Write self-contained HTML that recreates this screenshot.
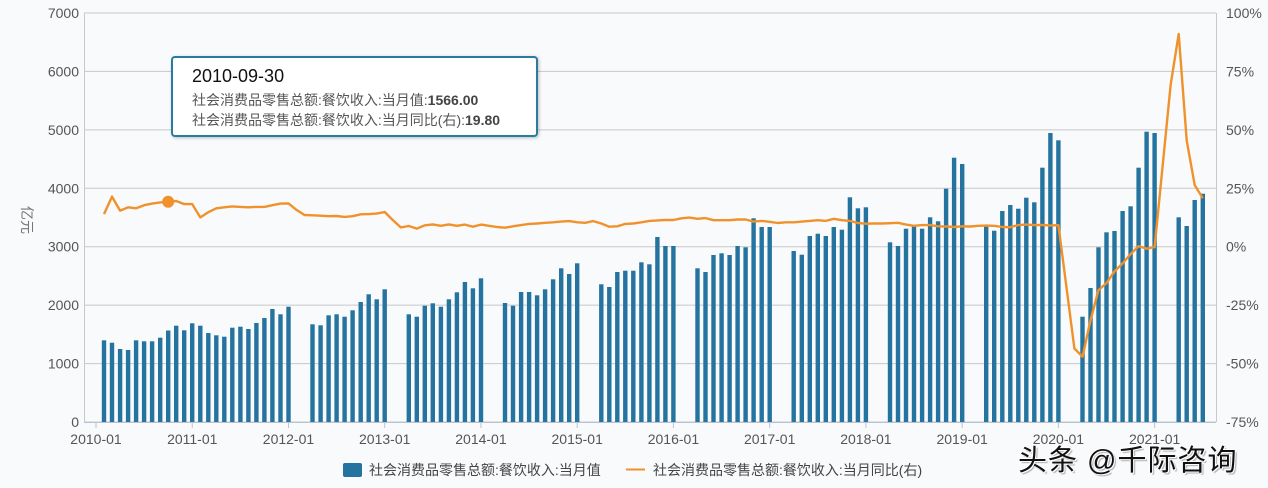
<!DOCTYPE html>
<html><head><meta charset="utf-8"><style>
html,body{margin:0;padding:0;background:#f9fafc;}
body{width:1268px;height:488px;overflow:hidden;position:relative;font-family:"Liberation Sans","Noto Sans CJK SC",sans-serif;}
svg text{font-family:"Liberation Sans","Noto Sans CJK SC",sans-serif;}
.tip{position:absolute;left:171px;top:56px;width:363px;height:77px;border:2px solid #2b7aa3;border-radius:4px;background:#fff;box-shadow:1px 1px 3px rgba(0,0,0,0.25);}
.tip .d{position:absolute;left:19px;top:8px;font-size:18px;color:#111;}
.tip .l{position:absolute;left:19px;font-size:14px;color:#555;}
.tip b{color:#444;}
.wm{position:absolute;left:1018px;top:437px;font-size:29px;color:#111;letter-spacing:1px;text-shadow:1px 1px 0 #fff,-1px -1px 0 #fff,2px 2px 1px rgba(0,0,0,0.3);font-family:"Liberation Sans","Noto Sans CJK SC",sans-serif;}
</style></head><body>
<svg id="c" width="1268" height="488" style="position:absolute;left:0;top:0"></svg>
<div class="tip"><div class="d">2010-09-30</div>
<div class="l" style="top:32px">社会消费品零售总额:餐饮收入:当月值:<b>1566.00</b></div>
<div class="l" style="top:52px">社会消费品零售总额:餐饮收入:当月同比(右):<b>19.80</b></div></div>
<div class="wm">头条 @千际咨询</div>
<script>
(function(){
var s='';
function X(i){return 96+8.02*(i+1);}
function YV(v){return 422-v*0.05843;}
function YP(p){return 248-p*2.337;}
for(var k=0;k<=7;k++){var gy=422-k*58.43;s+='<line x1="84" x2="1216" y1="'+gy+'" y2="'+gy+'" stroke="#c8c8c8" stroke-width="1"/>';
s+='<text x="79" y="'+(gy+5)+'" font-size="14" fill="#555" text-anchor="end">'+(k*1000)+'</text>';
var pct=(k-3)*25;s+='<text x="1226" y="'+(gy+5)+'" font-size="14" fill="#555">'+pct+'%</text>';}
s+='<line x1="84.5" x2="84.5" y1="13" y2="422" stroke="#c8c8c8"/><line x1="1216.5" x2="1216.5" y1="13" y2="422" stroke="#c8c8c8"/>';
s+='<line x1="84" x2="1216" y1="422.5" y2="422.5" stroke="#b8c4d4"/>';
for(var yr=0;yr<12;yr++){var tx=96+96.24*yr;s+='<line x1="'+tx+'" x2="'+tx+'" y1="422" y2="428" stroke="#b8c4d4"/>';
s+='<text x="'+tx+'" y="444" font-size="14" fill="#555" text-anchor="middle">'+(2010+yr)+'-01</text>';}
s+='<text transform="translate(22,220) rotate(90)" font-size="14" fill="#777" text-anchor="middle">亿元</text>';
var V={2010:[1398,1357,1250,1232,1398,1381,1381,1443,1566,1648,1569,1689],
2011:[1648,1523,1484,1460,1614,1631,1592,1694,1780,1934,1843,1973],
2012:[0,0,1672,1655,1826,1843,1802,1911,2054,2185,2100,2271],
2013:[0,0,1843,1802,1991,2031,1973,2100,2220,2396,2288,2459],
2014:[0,0,2037,1991,2225,2225,2168,2271,2442,2630,2533,2716],
2015:[0,0,2357,2311,2567,2590,2590,2733,2699,3166,3012,3012],
2016:[0,0,2630,2567,2858,2887,2858,3012,2990,3486,3337,3337],
2017:[0,0,2927,2863,3183,3223,3183,3337,3291,3846,3657,3675],
2018:[0,0,3075,3012,3308,3372,3308,3503,3435,3993,4523,4415],
2019:[0,0,3354,3274,3611,3714,3651,3839,3760,4352,4946,4821],
2020:[0,0,1802,2293,2990,3247,3269,3611,3692,4352,4968,4946],
2021:[0,0,3503,3354,3799,3907]};
for(var yk in V){var a=V[yk];for(var m=0;m<a.length;m++){if(!a[m])continue;var i=(parseInt(yk)-2010)*12+m;var bt=YV(a[m]);
s+='<rect x="'+(X(i)-2.2).toFixed(1)+'" y="'+bt.toFixed(1)+'" width="4.4" height="'+(422-bt).toFixed(1)+'" fill="#25739f"/>';}}
var P={2010:[14.5,22,16,17.4,17,18.3,19,19.5,19.8,20.1,18.8,18.8],
2011:[13.1,15.3,17,17.4,17.8,17.6,17.4,17.6,17.6,18.3,19,19.1],
2012:[16.3,14.1,14,13.8,13.6,13.7,13.3,13.6,14.4,14.5,14.7,15.4],
2013:[12,8.8,9.4,8.3,9.7,10.1,9.5,10.1,9.5,10,9.1,10],
2014:[9.5,9,8.7,9.3,9.8,10.3,10.5,10.8,11,11.3,11.5,11],
2015:[10.8,11.5,10.5,9.1,9.3,10.3,10.5,11,11.6,11.8,12,12],
2016:[12.7,13,12.5,12.8,11.9,11.9,11.9,12.2,12.2,11.3,11.6,11.2],
2017:[10.7,11,11,11.3,11.6,11.9,11.6,12.5,11.9,11.6,10.7,10.4],
2018:[10.5,10.5,10.6,10.8,10,9.5,9.8,9.8,9.3,9.2,9,9.3],
2019:[9.2,9.5,9.6,9.5,9,8.9,9.8,10,9.8,9.9,9.6,9.8],
2020:[null,-43,-46.5,-31,-18,-15,-10,-6.6,-2.6,0.8,-0.3,0.4],
2021:[null,70,91.6,46,26.9,21.3]};
var pts=[];for(var yk2 in P){var b=P[yk2];for(var m2=0;m2<b.length;m2++){if(b[m2]===null)continue;var j=(parseInt(yk2)-2010)*12+m2;pts.push(X(j).toFixed(1)+','+YP(b[m2]).toFixed(1));}}
s+='<polyline points="'+pts.join(' ')+'" fill="none" stroke="#f0922b" stroke-width="2.4" stroke-linejoin="round"/>';
s+='<circle cx="'+X(8)+'" cy="'+YP(19.8)+'" r="6" fill="#f0922b"/>';
s+='<rect x="343" y="463" width="19" height="14" rx="2" fill="#25739f"/>';
s+='<text x="369" y="475" font-size="14" fill="#444">社会消费品零售总额:餐饮收入:当月值</text>';
s+='<line x1="626" x2="645" y1="469.5" y2="469.5" stroke="#f0922b" stroke-width="2"/>';
s+='<text x="653" y="475" font-size="14" fill="#444">社会消费品零售总额:餐饮收入:当月同比(右)</text>';
document.getElementById('c').innerHTML=s;
})();
</script>
</body></html>
